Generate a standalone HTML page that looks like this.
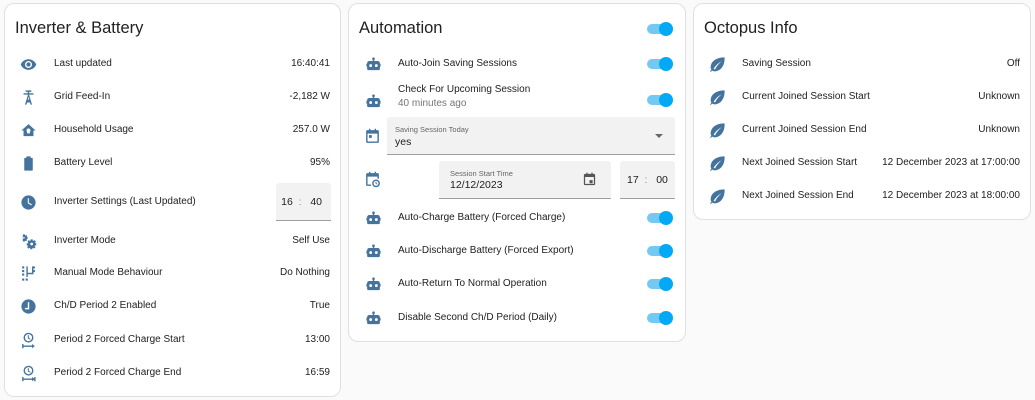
<!DOCTYPE html>
<html><head><meta charset="utf-8"><style>
*{box-sizing:border-box;margin:0;padding:0}
body{width:1035px;height:400px;background:#fafafa;font-family:"Liberation Sans",sans-serif;color:#212121;position:relative;overflow:hidden}
.card{position:absolute;background:#fff;border:1px solid #e0e0e0;border-radius:10px}
.title{position:absolute;font-size:16.5px;color:#212121;top:15px}
.row{position:absolute;left:0;right:0;height:20px;font-size:10px;line-height:20px}
.row svg{position:absolute;width:17px;height:17px;top:1.5px;fill:#44739e}
.row .n{position:absolute}
.row .v{position:absolute;text-align:right}
.tg{position:absolute;width:26px;height:14px}
.tg:before{content:"";position:absolute;left:0;top:2px;width:24px;height:10px;border-radius:5px;background:#74c9f3}
.tg:after{content:"";position:absolute;right:0;top:0;width:14px;height:14px;border-radius:7px;background:#03a9f4}
.box{position:absolute;background:#f2f2f2;border-bottom:1px solid #9e9e9e;border-radius:3px 3px 0 0}
.lbl{position:absolute;font-size:7.5px;color:#666}
.val{position:absolute;font-size:10.5px;color:#212121}
</style></head><body>
<svg width="0" height="0" style="position:absolute"><defs>
<symbol id="robot" viewBox="0 0 24 24"><path d="M12 2a2 2 0 0 1 1 3.7V7h5a3 3 0 0 1 3 3v1h1v4h-1v3a2 2 0 0 1-2 2H5a2 2 0 0 1-2-2v-3H2v-4h1v-1a3 3 0 0 1 3-3h5V5.7A2 2 0 0 1 12 2M8 11.5a2 2 0 1 0 0 4a2 2 0 1 0 0-4M16 11.5a2 2 0 1 0 0 4a2 2 0 1 0 0-4"/></symbol>
<symbol id="leaf" viewBox="0 0 24 24"><path d="M22 2C12 2 4 6 2.5 14c-.4 2.5 0 4.5 1 5.5L1.5 21.5l1 1 2-2c1 1 3.5 1.4 5.5 1 8-1.5 12.5-9.5 12-19.5zM6.5 18c3-5 7-8.5 12-11-4.5 3.5-7.5 7-10 12z"/></symbol>
<symbol id="clk" viewBox="0 0 24 24"><path d="M12 2a10 10 0 1 1 0 20a10 10 0 1 1 0-20M11 6v7l5 3 .8-1.3-4.3-2.5V6z"/></symbol>
<symbol id="clkr" viewBox="0 0 24 24"><path d="M12 1a7 7 0 1 1 0 14a7 7 0 1 1 0-14m0 2a5 5 0 1 0 0 10a5 5 0 1 0 0-10m-1 1.5h1.5v3.8l2.5 1.5-.8 1.2L11 9.2zM3 17h2v6H3zM5 19h12v-2l4 3-4 3v-2H5z"/></symbol>
</defs></svg>

<div class="card" style="left:4px;top:3px;width:337px;height:394px">
<div class="title" style="left:10px">Inverter &amp; Battery</div>
<div class="row" style="top:50px"><svg style="left:15px" viewBox="0 0 24 24"><path d="M12,9A3,3 0 0,0 9,12A3,3 0 0,0 12,15A3,3 0 0,0 15,12A3,3 0 0,0 12,9M12,17A5,5 0 0,1 7,12A5,5 0 0,1 12,7A5,5 0 0,1 17,12A5,5 0 0,1 12,17M12,4.5C7,4.5 2.73,7.61 1,12C2.73,16.39 7,19.5 12,19.5C17,19.5 21.27,16.39 23,12C21.27,7.61 17,4.5 12,4.5Z"/></svg><span class="n" style="left:49px">Last updated</span><span class="v" style="right:10px">16:40:41</span></div>
<div class="row" style="top:83px"><svg style="left:15px" viewBox="0 0 24 24"><path d="M8 2h8v2h-3v2h6v2h-6v1l4 13h-2l-1-3H10l-1 3H7l4-13V8H5V6h6V4H8zM12 11l-1 4h2z"/></svg><span class="n" style="left:49px">Grid Feed-In</span><span class="v" style="right:10px">-2,182 W</span></div>
<div class="row" style="top:116px"><svg style="left:15px" viewBox="0 0 24 24"><path d="M12 3l10 9h-3v8H5v-8H2zm0 6a3 3 0 0 0-2 5v2h4v-2a3 3 0 0 0-2-5z"/></svg><span class="n" style="left:49px">Household Usage</span><span class="v" style="right:10px">257.0 W</span></div>
<div class="row" style="top:149px"><svg style="left:15px" viewBox="0 0 24 24"><path d="M9 2h6v2h2a1 1 0 0 1 1 1v16a1 1 0 0 1-1 1H7a1 1 0 0 1-1-1V5a1 1 0 0 1 1-1h2z"/></svg><span class="n" style="left:49px">Battery Level</span><span class="v" style="right:10px">95%</span></div>
<div class="box" style="left:271px;top:179px;width:55px;height:38px"></div>
<div class="row" style="top:188px"><svg style="left:15px" viewBox="0 0 24 24"><use href="#clk" width="24" height="24"/></svg><span class="n" style="left:49px">Inverter Settings (Last Updated)</span><span class="v" style="right:18px;font-size:10.5px">16&nbsp;&nbsp;<span style="color:#888">:</span>&nbsp;&nbsp;&nbsp;40</span></div>
<div class="row" style="top:227px"><svg style="left:15px" viewBox="0 0 24 24"><path d="M4 2h3v1.2l1 .5.8-.8 1.5 1.5-.8.8.5 1H11v2H9.8l-.5 1 .8.8-1.5 1.5-.8-.8-1 .5V12H4v-1.2zM5.5 5.5a1.2 1.2 0 1 0 .01 0M15 9h3v1.6l1.3.6 1.2-1.2 2 2-1.2 1.2.6 1.3H23v3h-1.6l-.6 1.3 1.2 1.2-2 2-1.2-1.2-1.3.6V23h-3v-1.6l-1.3-.6-1.2 1.2-2-2 1.2-1.2-.6-1.3H9.5v-3h1.6l.6-1.3-1.2-1.2 2-2 1.2 1.2 1.3-.6zm1.5 4.5a2 2 0 1 0 .01 0"/></svg><span class="n" style="left:49px">Inverter Mode</span><span class="v" style="right:10px">Self Use</span></div>
<div class="row" style="top:259px"><svg style="left:15px" viewBox="0 0 24 24"><path d="M3 2h3v3H3zM3 7h3v3H3zM3 12h3v3H3zM3 19h3v3H3zM8 19h3v3H8zM18 2h3v3h-3zM18 7h3v3h-3zM9 2h2v9h6V2h2v11H11v4H9z"/></svg><span class="n" style="left:49px">Manual Mode Behaviour</span><span class="v" style="right:10px">Do Nothing</span></div>
<div class="row" style="top:292px"><svg style="left:15px" viewBox="0 0 24 24"><path d="M12 2a10 10 0 1 1 0 20a10 10 0 1 1 0-20M11 6v8H7v2h6V6z"/></svg><span class="n" style="left:49px">Ch/D Period 2 Enabled</span><span class="v" style="right:10px">True</span></div>
<div class="row" style="top:326px"><svg style="left:15px" viewBox="0 0 24 24"><use href="#clkr" width="24" height="24"/></svg><span class="n" style="left:49px">Period 2 Forced Charge Start</span><span class="v" style="right:10px">13:00</span></div>
<div class="row" style="top:359px"><svg style="left:15px" viewBox="0 0 24 24"><use href="#clkr" width="24" height="24"/><rect x="20" y="17" width="2" height="6"/></svg><span class="n" style="left:49px">Period 2 Forced Charge End</span><span class="v" style="right:10px">16:59</span></div>
</div>

<div class="card" style="left:348px;top:3px;width:338px;height:339px">
<div class="title" style="left:10px">Automation</div>
<div class="tg" style="left:298px;top:18px"></div>
<div class="row" style="top:50px"><svg style="left:16px" viewBox="0 0 24 24"><use href="#robot" width="24" height="24"/></svg><span class="n" style="left:49px">Auto-Join Saving Sessions</span><div class="tg" style="left:298px;top:3px"></div></div>
<div class="row" style="top:83px;height:30px"><svg style="left:16px;top:6px" viewBox="0 0 24 24"><use href="#robot" width="24" height="24"/></svg><span class="n" style="left:49px;top:-7px">Check For Upcoming Session</span><span class="n" style="left:49px;top:7px;color:#757575">40 minutes ago</span><div class="tg" style="left:298px;top:6px"></div></div>
<div class="row" style="top:119px"><svg style="left:15px;top:5px" viewBox="0 0 24 24"><path d="M7 1h2v2h6V1h2v2h2a2 2 0 0 1 2 2v14a2 2 0 0 1-2 2H5a2 2 0 0 1-2-2V5a2 2 0 0 1 2-2h2zM5 8v11h14V8zm2 2h4v4H7z"/></svg></div>
<div class="box" style="left:38px;top:113px;width:288px;height:38px"><div class="lbl" style="left:8px;top:8px">Saving Session Today</div><div class="val" style="left:8px;top:19px">yes</div><div style="position:absolute;right:12px;top:17px;border:4px solid transparent;border-top:4px solid #666"></div></div>
<div class="row" style="top:165px"><svg style="left:15px;top:2px" viewBox="0 0 24 24"><path d="M7 1h2v2h6V1h2v2h2a2 2 0 0 1 2 2v6h-2V8H5v11h5v2H5a2 2 0 0 1-2-2V5a2 2 0 0 1 2-2h2zM17 12a5.5 5.5 0 1 1 0 11a5.5 5.5 0 1 1 0-11m0 2a3.5 3.5 0 1 0 0 7a3.5 3.5 0 1 0 0-7m-.7 1h1.3v2.3l1.6 1-.6 1-2.3-1.4z"/></svg></div>
<div class="box" style="left:90px;top:157px;width:172px;height:38px"><div class="lbl" style="left:11px;top:8px">Session Start Time</div><div class="val" style="left:11px;top:18px">12/12/2023</div><svg style="position:absolute;left:143px;top:11px;width:15px;height:15px;fill:#555" viewBox="0 0 24 24"><path d="M7 1h2v2h6V1h2v2h2a2 2 0 0 1 2 2v14a2 2 0 0 1-2 2H5a2 2 0 0 1-2-2V5a2 2 0 0 1 2-2h2zM5 8v11h14V8zm7 5h5v5h-5z"/></svg></div>
<div class="box" style="left:271px;top:157px;width:55px;height:38px"><div class="val" style="left:7px;top:13px">17&nbsp;&nbsp;<span style="color:#888">:</span>&nbsp;&nbsp;&nbsp;00</div></div>
<div class="row" style="top:204px"><svg style="left:16px" viewBox="0 0 24 24"><use href="#robot" width="24" height="24"/></svg><span class="n" style="left:49px">Auto-Charge Battery (Forced Charge)</span><div class="tg" style="left:298px;top:3px"></div></div>
<div class="row" style="top:237px"><svg style="left:16px" viewBox="0 0 24 24"><use href="#robot" width="24" height="24"/></svg><span class="n" style="left:49px">Auto-Discharge Battery (Forced Export)</span><div class="tg" style="left:298px;top:3px"></div></div>
<div class="row" style="top:270px"><svg style="left:16px" viewBox="0 0 24 24"><use href="#robot" width="24" height="24"/></svg><span class="n" style="left:49px">Auto-Return To Normal Operation</span><div class="tg" style="left:298px;top:3px"></div></div>
<div class="row" style="top:304px"><svg style="left:16px" viewBox="0 0 24 24"><use href="#robot" width="24" height="24"/></svg><span class="n" style="left:49px">Disable Second Ch/D Period (Daily)</span><div class="tg" style="left:298px;top:3px"></div></div>
</div>

<div class="card" style="left:693px;top:3px;width:338px;height:217px">
<div class="title" style="left:10px">Octopus Info</div>
<div class="row" style="top:50px"><svg style="left:15px" viewBox="0 0 24 24"><use href="#leaf" width="24" height="24"/></svg><span class="n" style="left:48px">Saving Session</span><span class="v" style="right:10px">Off</span></div>
<div class="row" style="top:83px"><svg style="left:15px" viewBox="0 0 24 24"><use href="#leaf" width="24" height="24"/></svg><span class="n" style="left:48px">Current Joined Session Start</span><span class="v" style="right:10px">Unknown</span></div>
<div class="row" style="top:116px"><svg style="left:15px" viewBox="0 0 24 24"><use href="#leaf" width="24" height="24"/></svg><span class="n" style="left:48px">Current Joined Session End</span><span class="v" style="right:10px">Unknown</span></div>
<div class="row" style="top:149px"><svg style="left:15px" viewBox="0 0 24 24"><use href="#leaf" width="24" height="24"/></svg><span class="n" style="left:48px">Next Joined Session Start</span><span class="v" style="right:10px">12 December 2023 at 17:00:00</span></div>
<div class="row" style="top:182px"><svg style="left:15px" viewBox="0 0 24 24"><use href="#leaf" width="24" height="24"/></svg><span class="n" style="left:48px">Next Joined Session End</span><span class="v" style="right:10px">12 December 2023 at 18:00:00</span></div>
</div>
</body></html>
